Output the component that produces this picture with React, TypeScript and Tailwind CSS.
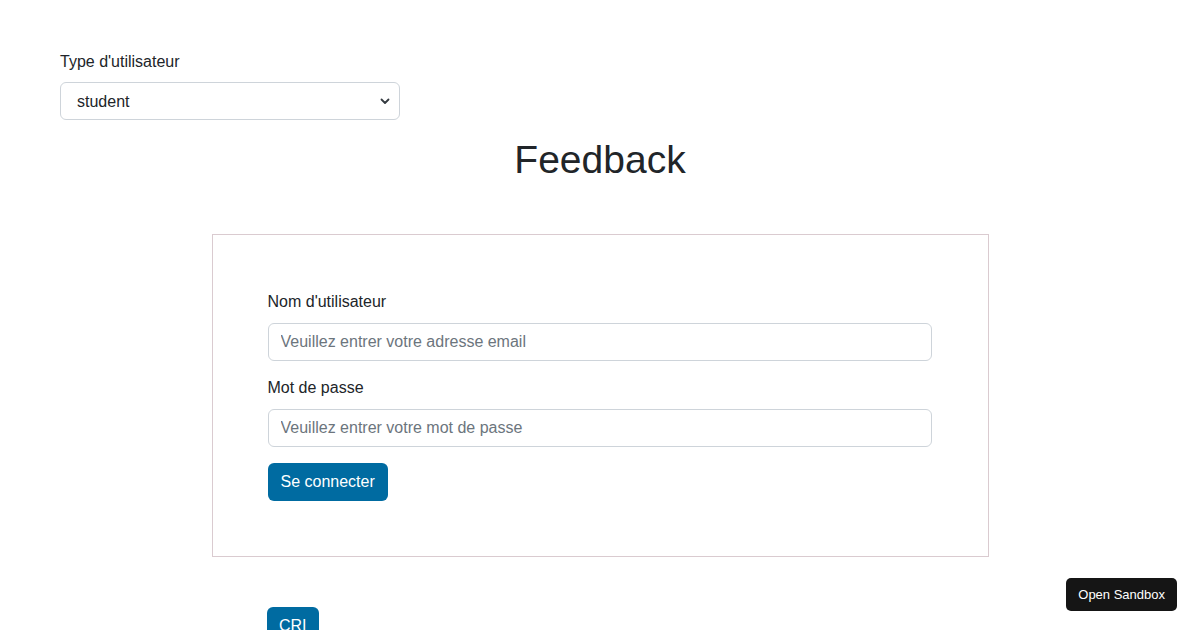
import { useState } from "react";

export default function App() {
  const [role, setRole] = useState("student");
  const [email, setEmail] = useState("");
  const [password, setPassword] = useState("");

  return (
    <div className="relative min-h-[630px] bg-white text-[#212529] font-['Liberation_Sans',Arial,sans-serif] overflow-hidden h-[630px]">
      {/* User type picker */}
      <div className="pt-[50px] px-[60px]">
        <label className="block text-base leading-6 mb-2">Type d'utilisateur</label>
        <div className="relative w-[340px]">
          <select
            value={role}
            onChange={(e) => setRole(e.target.value)}
            className="appearance-none w-full h-[38px] border border-[#ced4da] rounded-md bg-white pl-4 pr-9 pt-[2px] text-base text-[#212529] outline-none"
          >
            <option value="student">student</option>
            <option value="teacher">teacher</option>
            <option value="admin">admin</option>
          </select>
          <svg
            className="absolute right-[10px] top-[15px] pointer-events-none"
            width="10"
            height="8"
            viewBox="0 0 10 8"
          >
            <path d="M1.5 2.5 L5 6 L8.5 2.5" fill="none" stroke="#343a40" strokeWidth="1.8" strokeLinecap="round" strokeLinejoin="round" />
          </svg>
        </div>
      </div>

      {/* Title */}
      <h1 className="mt-4 text-center text-[39px] leading-[48px] font-normal">Feedback</h1>

      {/* Login card */}
      <div className="mt-[50px] mx-auto w-[777px] border border-[#dacbd0] px-[55px] pt-[55px] pb-[55px]">
        <label className="block text-base leading-6 mb-[9px]">Nom d'utilisateur</label>
        <input
          type="email"
          value={email}
          onChange={(e) => setEmail(e.target.value)}
          placeholder="Veuillez entrer votre adresse email"
          className="block w-[664px] h-[38px] border border-[#ced4da] rounded-md px-3 text-base placeholder:text-[#6c757d] outline-none"
        />
        <label className="block text-base leading-6 mt-[15px] mb-[9px]">Mot de passe</label>
        <input
          type="password"
          value={password}
          onChange={(e) => setPassword(e.target.value)}
          placeholder="Veuillez entrer votre mot de passe"
          className="block w-[664px] h-[38px] border border-[#ced4da] rounded-md px-3 text-base placeholder:text-[#6c757d] outline-none"
        />
        <button className="mt-4 h-[38px] px-[13px] rounded-md bg-[#006ba1] text-white text-base">
          Se connecter
        </button>
      </div>

      {/* CRI link */}
      <div className="mt-[50px] pl-[267px]">
        <button className="h-[38px] px-3 rounded-md bg-[#006ba1] text-white text-base">CRI</button>
      </div>

      {/* Sandbox overlay */}
      <button className="absolute right-[23px] bottom-[19px] h-[33px] px-3 rounded-[5px] bg-[#151515] text-white text-[13px] font-['Liberation_Sans',Arial,sans-serif]">
        Open Sandbox
      </button>
    </div>
  );
}
